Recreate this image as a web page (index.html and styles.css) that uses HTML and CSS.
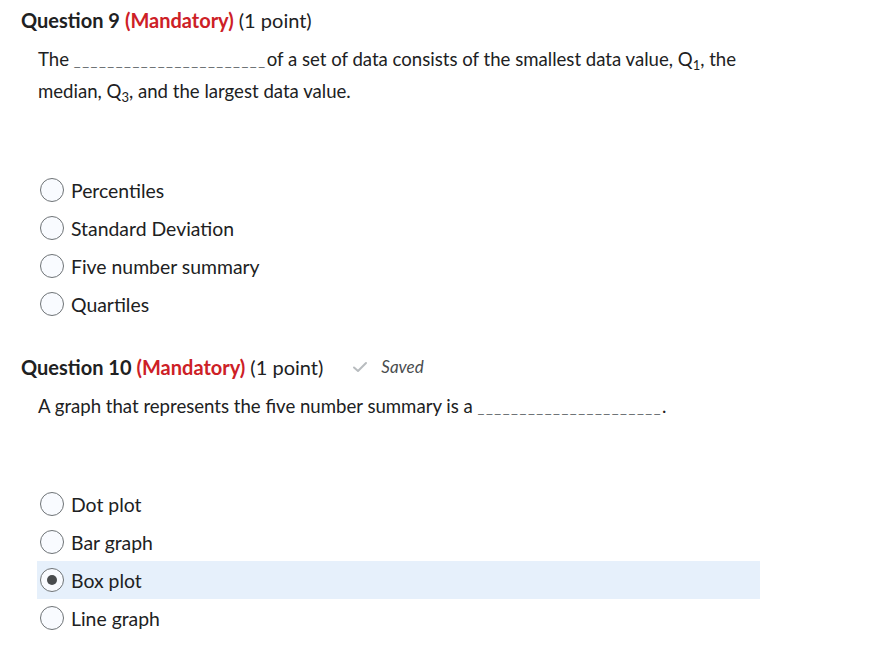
FILE: index.html
```html
<!DOCTYPE html>
<html lang="en">

<head>
    <meta charset="UTF-8">
    <meta name="viewport" content="width=device-width, initial-scale=1.0">
    <title>Quiz</title>
    <link rel="stylesheet" href="styles.css">
</head>

<body>
    <div class="question">
        <h2 class="question-title">Question 9 <span class="mandatory">(Mandatory)</span> <span class="points">(1 point)</span></h2>
        <p class="question-text">The <span class="blank">_______________________</span>of a set of data consists of the smallest data value, Q<sub>1</sub>, the median, Q<sub>3</sub>, and the largest data value.</p>
        <div class="choices">
            <label class="choice"><span class="radio"></span>Percentiles</label>
            <label class="choice"><span class="radio"></span>Standard Deviation</label>
            <label class="choice"><span class="radio"></span>Five number summary</label>
            <label class="choice"><span class="radio"></span>Quartiles</label>
        </div>
    </div>

    <div class="question second">
        <h2 class="question-title">Question 10 <span class="mandatory">(Mandatory)</span> <span class="points">(1 point)</span>
            <span class="saved">
                <svg width="16" height="14" viewBox="0 0 16 14"><path d="M2 7.5 L6 11 L14 3" fill="none" stroke="#b8bcbf" stroke-width="2" stroke-linecap="round" stroke-linejoin="round"/></svg>
                <em>Saved</em>
            </span>
        </h2>
        <p class="question-text">A graph that represents the five number summary is a <span class="blank">______________________</span>.</p>
        <div class="choices">
            <label class="choice"><span class="radio"></span>Dot plot</label>
            <label class="choice"><span class="radio"></span>Bar graph</label>
            <label class="choice selected"><span class="radio checked"></span>Box plot</label>
            <label class="choice"><span class="radio"></span>Line graph</label>
        </div>
    </div>
</body>
</html>
```

FILE: styles.css
```css
body {
    font-family: 'Lato', 'Open Sans', sans-serif;
    margin: 0;
    padding: 8px 0 0 21px;
    color: #202122;
    background-color: white;
}

.question-title {
    font-size: 20px;
    font-weight: 700;
    margin: 0;
    line-height: 24px;
    display: flex;
    align-items: center;
    gap: 5px;
}

.mandatory {
    color: #cd2026;
}

.points {
    font-weight: 400;
}

.saved {
    display: flex;
    align-items: center;
    gap: 13px;
    margin-left: 24px;
    font-size: 17px;
    font-weight: 400;
    color: #494c4e;
}

.question-text {
    margin: 12px 0 0 17px;
    font-size: 18.6px;
    line-height: 31px;
    width: 730px;
}

.question-text sub {
    font-size: 13px;
    line-height: 0;
    vertical-align: baseline;
    position: relative;
    top: 4px;
}

.blank {
    color: #6e7376;
    letter-spacing: 1.5px;
    font-size: 15px;
}

.choices {
    margin: 64px 0 0 16px;
    width: 723px;
}

.choice {
    display: flex;
    align-items: center;
    height: 38px;
    font-size: 19.4px;
    padding-left: 3px;
    cursor: pointer;
}

.choice.selected {
    background-color: #e6f0fb;
}

.radio {
    width: 22px;
    height: 22px;
    border: 1px solid #6e7376;
    border-radius: 50%;
    background-color: #f9fbff;
    margin-right: 7px;
    flex-shrink: 0;
    position: relative;
}

.radio.checked::after {
    content: '';
    position: absolute;
    top: 6px;
    left: 6px;
    width: 10px;
    height: 10px;
    border-radius: 50%;
    background-color: #494c4e;
}

.second {
    margin-top: 32px;
}

.second .question-text {
    margin-top: 12px;
}

.second .choices {
    margin-top: 62px;
}
```
